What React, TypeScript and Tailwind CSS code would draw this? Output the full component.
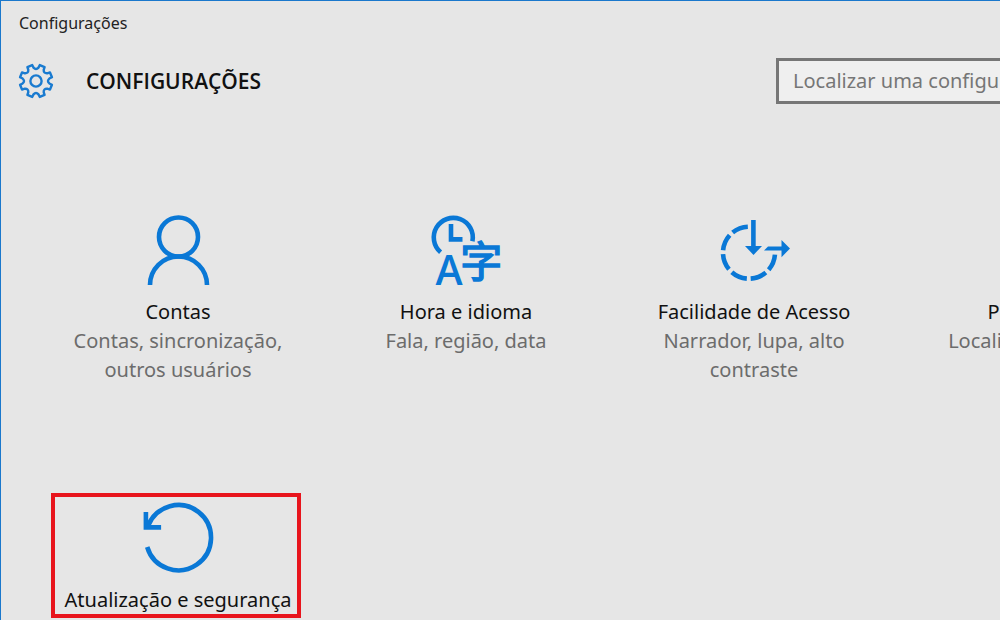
import React from "react";

const polar = (radius: number, degrees: number) => {
  const a = (degrees * Math.PI) / 180;
  return `${(18 + radius * Math.cos(a)).toFixed(2)} ${(18 + radius * Math.sin(a)).toFixed(2)}`;
};

// Eight teeth, joined by rounded notches.
const gearPath =
  Array.from({ length: 8 }, (_, i) => {
    const a = i * 45 + 22.5;
    return `${i === 0 ? "M" : "L"}${polar(13.6, a - 12)} L${polar(16.4, a - 9)} L${polar(16.4, a + 9)} L${polar(13.6, a + 12)} Q${polar(10.6, a + 22.5)} ${polar(13.6, a + 33)}`;
  }).join(" ") + " Z";

function GearIcon() {
  return (
    <svg viewBox="0 0 36 36" className="size-9 shrink-0" fill="none" stroke="#1a7bd0" strokeWidth="2.4" strokeLinejoin="round" aria-hidden="true">
      <path d={gearPath} />
      <circle cx="18" cy="18" r="5.6" />
    </svg>
  );
}

function TileIcon({ children }: { children: React.ReactNode }) {
  return (
    <svg viewBox="0 0 72 72" className="mb-[11px] size-[72px] shrink-0 overflow-visible" fill="none" stroke="#0a78d6" strokeWidth="4.6" aria-hidden="true">
      {children}
    </svg>
  );
}

function AccountIcon() {
  return (
    <TileIcon>
      <circle cx="36.5" cy="23" r="19.5" />
      <path d="M8 71a28.5 28.5 0 0 1 57 0" />
    </TileIcon>
  );
}

function TimeLanguageIcon() {
  return (
    <TileIcon>
      <path d="M10.600 38.200A19.500 19.500 0 1 1 42.400 27.200" />
      <path d="M21 10v15.400h11.500" />
      <g fill="#0a78d6" stroke="none">
        <text x="19" y="71" textAnchor="middle" fontSize="41" fontWeight="600" fontFamily="'Open Sans', sans-serif">A</text>
        <text x="51.3" y="63" textAnchor="middle" fontSize="42" fontWeight="400" stroke="#0a78d6" strokeWidth="1.5" fontFamily="'Noto Sans CJK SC', sans-serif">字</text>
      </g>
    </TileIcon>
  );
}

function EaseOfAccessIcon() {
  return (
    <TileIcon>
      <path d="M57 38.700A26 26 0 1 1 31 12.700" strokeDasharray="16.4 4.02" strokeDashoffset="-2" />
      <path d="M35.400 6v28" />
      <g fill="#0a78d6" stroke="none">
        <path d="M27 32h17l-8.500 9z" />
        <path d="M50 32.600h13.500v-6.600l8.500 8.600-8.500 8.600v-6.600H46z" />
      </g>
    </TileIcon>
  );
}

function PrivacyIcon() {
  return (
    <TileIcon>
      <rect x="12" y="32" width="48" height="36" />
      <path d="M22 32V20a14 14 0 0 1 28 0v12" />
    </TileIcon>
  );
}

function UpdateIcon() {
  return (
    <TileIcon>
      <path d="M5.200 45A32.600 32.600 0 1 0 6 24" />
      <path d="M3.900 10v15.400h15.200" />
    </TileIcon>
  );
}

type Tile = {
  title: string;
  description?: string;
  icon: React.ReactNode;
  highlighted?: boolean;
};

const tiles: Tile[] = [
  { title: "Contas", description: "Contas, sincronização, outros usuários", icon: <AccountIcon /> },
  { title: "Hora e idioma", description: "Fala, região, data", icon: <TimeLanguageIcon /> },
  { title: "Facilidade de Acesso", description: "Narrador, lupa, alto contraste", icon: <EaseOfAccessIcon /> },
  { title: "Privacidade", description: "Localização, câmera", icon: <PrivacyIcon /> },
  { title: "Atualização e segurança", icon: <UpdateIcon />, highlighted: true },
];

function SettingsTile({ title, description, icon, highlighted }: Tile) {
  return (
    <button type="button" className="relative flex flex-col items-center px-8 pt-[9px] text-center text-[20px] leading-[29px]">
      {icon}
      <span className="whitespace-nowrap text-[#111111]">{title}</span>
      {description && <span className="text-[#6c6c6c]">{description}</span>}
      {highlighted && <span className="absolute left-[17px] top-0 h-[125px] w-[250px] border-4 border-[#e8141c]" />}
    </button>
  );
}

export default function App() {
  return (
    <div className="h-screen overflow-hidden border-l border-t border-[#1a78cc] bg-[#e6e6e6] font-['Noto_Sans','Open_Sans',sans-serif]">
      <div className="pl-[18px] pt-[10px] text-base leading-6 text-[#222222]">Configurações</div>
      <header className="flex items-center pl-[17px] pt-[23px]">
        <GearIcon />
        <h1 className="ml-8 font-['Open_Sans',sans-serif] text-[21px] font-semibold leading-[29px] text-[#111111]">CONFIGURAÇÕES</h1>
        <input
          type="search"
          aria-label="Localizar uma configuração"
          placeholder="Localizar uma configuração"
          className="-mr-28 ml-auto h-[46px] w-[336px] shrink-0 border-[3px] border-[#767676] bg-[#efefef] px-[14px] pb-0.5 text-[20px] outline-none placeholder:text-[#767676]"
        />
      </header>
      <main className="mt-[101px] grid auto-rows-[288px] grid-cols-[repeat(4,288px)] pl-[33px]">
        {tiles.map((tile) => (
          <SettingsTile key={tile.title} {...tile} />
        ))}
      </main>
    </div>
  );
}
